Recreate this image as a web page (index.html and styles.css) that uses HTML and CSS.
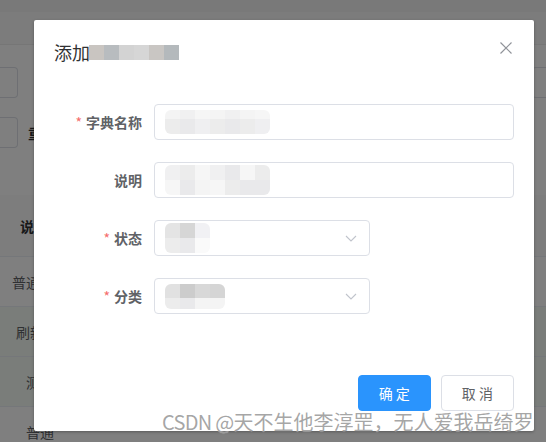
FILE: index.html
```html
<!DOCTYPE html>
<html lang="zh-CN">
<head>
<meta charset="utf-8">
<title>添加</title>
<link rel="stylesheet" href="styles.css">
</head>
<body>
<div class="page">
  <div class="topbar"></div>
  <div class="tabs"></div>
  <div class="search">
    <div class="srow"><span class="sinput"></span><span class="sinput far"></span></div>
    <div class="srow"><span class="sinput"></span><span class="stext">重置</span></div>
  </div>
  <div class="table">
    <div class="tr th"><span class="cell p20">说明</span></div>
    <div class="tr"><span class="cell p12">普通话</span></div>
    <div class="tr hl"><span class="cell p16">刷新</span></div>
    <div class="tr hl"><span class="cell p26">测试</span></div>
    <div class="tr"><span class="cell p26">普通</span></div>
  </div>
</div>

<div class="overlay"></div>

<div class="dialog">
  <div class="dhead">
    <span class="dtitle">添加</span>
    <span class="mosaic tm">
      <i class="m a1"></i><i class="m a2"></i><i class="m a3"></i><i class="m a4"></i><i class="m a5"></i><i class="m a6"></i>
    </span>
    <button class="close" aria-label="关闭">
      <svg width="14" height="14" viewBox="0 0 14 14"><path d="M1.5 1.5 L12.5 12.5 M12.5 1.5 L1.5 12.5" stroke="#909399" stroke-width="1.2" fill="none"/></svg>
    </button>
  </div>
  <div class="dbody">
    <div class="item">
      <label class="lbl req">字典名称</label>
      <div class="input wide">
        <span class="mosaic m7 r9-15">
          <i class="m l1"></i><i class="m l2"></i><i class="m l3"></i><i class="m l1"></i><i class="m l2"></i><i class="m l1"></i><i class="m l3"></i>
          <i class="m l4"></i><i class="m l5"></i><i class="m l6"></i><i class="m l4"></i><i class="m l5"></i><i class="m l4"></i><i class="m l6"></i>
        </span>
      </div>
    </div>
    <div class="item">
      <label class="lbl">说明</label>
      <div class="input wide">
        <span class="mosaic m7 r15-15">
          <i class="m l2"></i><i class="m l4"></i><i class="m l3"></i><i class="m l2"></i><i class="m l5"></i><i class="m l3"></i><i class="m l4"></i>
          <i class="m l3"></i><i class="m l5"></i><i class="m l1"></i><i class="m l3"></i><i class="m l4"></i><i class="m l5"></i><i class="m l5"></i>
        </span>
      </div>
    </div>
    <div class="item">
      <label class="lbl req">状态</label>
      <div class="input select">
        <span class="mosaic m3 r15-15">
          <i class="m s1"></i><i class="m s2"></i><i class="m s3"></i>
          <i class="m l4"></i><i class="m l5"></i><i class="m s4"></i>
        </span>
        <svg class="arrow" width="12" height="7" viewBox="0 0 12 7"><path d="M1 1 L6 6 L11 1" stroke="#c0c4cc" stroke-width="1.1" fill="none"/></svg>
      </div>
    </div>
    <div class="item">
      <label class="lbl req">分类</label>
      <div class="input select">
        <span class="mosaic m4 r14-11">
          <i class="m s5"></i><i class="m s6"></i><i class="m s7"></i><i class="m s8"></i>
          <i class="m l4"></i><i class="m l5"></i><i class="m l1"></i><i class="m l1"></i>
        </span>
        <svg class="arrow" width="12" height="7" viewBox="0 0 12 7"><path d="M1 1 L6 6 L11 1" stroke="#c0c4cc" stroke-width="1.1" fill="none"/></svg>
      </div>
    </div>
  </div>
  <div class="dfoot">
    <button class="btn primary">确 定</button>
    <button class="btn">取 消</button>
  </div>
</div>

<div class="watermark"><span class="wm-latin">CSDN @</span>天不生他李淳罡，无人爱我岳绮罗</div>
</body>
</html>
```
FILE: styles.css
```css
* { box-sizing: border-box; }
html, body { margin: 0; padding: 0; }
body {
  width: 546px;
  height: 442px;
  overflow: hidden;
  position: relative;
  font-family: "Noto Sans CJK SC", "Noto Sans", "Liberation Sans", sans-serif;
  background: #ffffff;
}

/* background page */
.page { width: 546px; height: 442px; overflow: hidden; }
.topbar { height: 12px; background: #f2f2f2; }
.tabs { height: 33px; background: #f8f8f8; border-bottom: 1px solid #ececec; }
.search {
  display: flex;
  flex-direction: column;
  gap: 19px;
  padding-top: 22px;
  padding-bottom: 47px;
}
.srow { display: flex; align-items: center; height: 31px; }
.sinput {
  display: block;
  flex-shrink: 0;
  width: 18px;
  height: 31px;
  border: 1px solid #dcdfe6;
  border-left: 0;
  border-radius: 0 4px 4px 0;
  background: #fff;
}
.sinput.far {
  margin-left: auto;
  width: 14px;
  border-left: 1px solid #dcdfe6;
  border-right: 0;
  border-radius: 4px 0 0 4px;
}
.stext { margin-left: 10px; font-size: 14px; color: #303133; font-weight: 700; white-space: nowrap; }
.tr {
  display: flex;
  align-items: center;
  height: 50px;
  border-bottom: 1px solid #ebeef5;
  font-size: 14px;
  color: #606266;
}
.tr.th { height: 62px; background: #fafafa; color: #303133; font-weight: 700; }
.tr.hl { background: #f4faf4; }
.cell { white-space: nowrap; }
.p12 { padding-left: 12px; }
.p16 { padding-left: 16px; }
.p20 { padding-left: 20px; }
.p26 { padding-left: 26px; }

.overlay {
  position: absolute;
  inset: 0;
  background: rgba(0, 0, 0, 0.5);
}

/* dialog */
.dialog {
  position: absolute;
  left: 34px;
  top: 20px;
  width: 500px;
  background: #fff;
  border-radius: 2px;
  box-shadow: 0 1px 3px rgba(0, 0, 0, 0.3);
}
.dhead {
  display: flex;
  align-items: center;
  height: 54px;
  padding: 20px 20px 10px;
}
.dtitle { font-size: 18px; line-height: 24px; color: #303133; }
.close {
  margin-left: auto;
  width: 16px;
  height: 16px;
  padding: 0;
  border: 0;
  background: none;
  display: flex;
  align-items: center;
  justify-content: center;
  margin-top: -8px;
}

.dbody { padding: 30px 20px 30px; }
.item { display: flex; align-items: center; height: 36px; margin-bottom: 22px; }
.item:last-child { margin-bottom: 21px; }
.lbl {
  width: 100px;
  padding-right: 12px;
  text-align: right;
  font-size: 14px;
  line-height: 36px;
  font-weight: 700;
  color: #606266;
}
.lbl.req::before { content: "*"; color: #f56c6c; margin-right: 4px; font-weight: 400; }

.input {
  height: 36px;
  border: 1px solid #dcdfe6;
  border-radius: 4px;
  display: flex;
  align-items: center;
  padding-left: 10px;
  background: #fff;
}
.input.wide { width: 360px; }
.input.select { width: 216px; padding-right: 12px; }
.arrow { margin-left: auto; }

/* mosaic (pixelated blurred values) */
.mosaic { display: grid; border-radius: 6px; overflow: hidden; }
.m { display: block; }
.m7 { grid-template-columns: repeat(7, 15px); }
.m3 { grid-template-columns: repeat(3, 15px); }
.m4 { grid-template-columns: repeat(4, 15px); }
.r9-15 { grid-template-rows: 9px 15px; }
.r15-15 { grid-template-rows: 15px 15px; }
.r14-11 { grid-template-rows: 14px 11px; }
.tm { grid-template-columns: repeat(6, 15px); grid-template-rows: 15px; margin-left: -1px; border-radius: 0; }
.a1 { background: #c9c5c1; }
.a2 { background: #b8bcbf; }
.a3 { background: #d3d3d3; }
.a4 { background: #d6d6d6; }
.a5 { background: #c9c6c3; }
.a6 { background: #b4b9bc; }
.l1 { background: #f4f4f4; }
.l2 { background: #f0f0f1; }
.l3 { background: #f6f6f6; }
.l4 { background: #ececec; }
.l5 { background: #e9e9eb; }
.l6 { background: #efeff1; }
.s1 { background: #e4e4e4; }
.s2 { background: #d6d6d6; }
.s3 { background: #f1f1f4; }
.s4 { background: #fafafa; }
.s5 { background: #e1e1e1; }
.s6 { background: #cccccc; }
.s7 { background: #d8d8d8; }
.s8 { background: #d5d5d5; }

.dfoot {
  display: flex;
  justify-content: flex-end;
  gap: 10px;
  padding: 10px 20px 20px;
}
.btn {
  height: 36px;
  padding: 0 20px;
  font-family: "Noto Sans CJK SC", "Noto Sans", sans-serif;
  font-size: 14px;
  border: 1px solid #dcdfe6;
  border-radius: 4px;
  background: #fff;
  color: #606266;
  white-space: pre;
}
.btn.primary { background: #2a94fd; border-color: #2a94fd; color: #fff; }

.watermark {
  position: absolute;
  left: 162px;
  top: 411px;
  font-size: 20px;
  line-height: 22px;
  color: rgba(150, 150, 150, 0.85);
  text-shadow: 0 0 1px rgba(255, 255, 255, 0.6);
  white-space: nowrap;
}
.wm-latin { letter-spacing: -0.7px; }
```
